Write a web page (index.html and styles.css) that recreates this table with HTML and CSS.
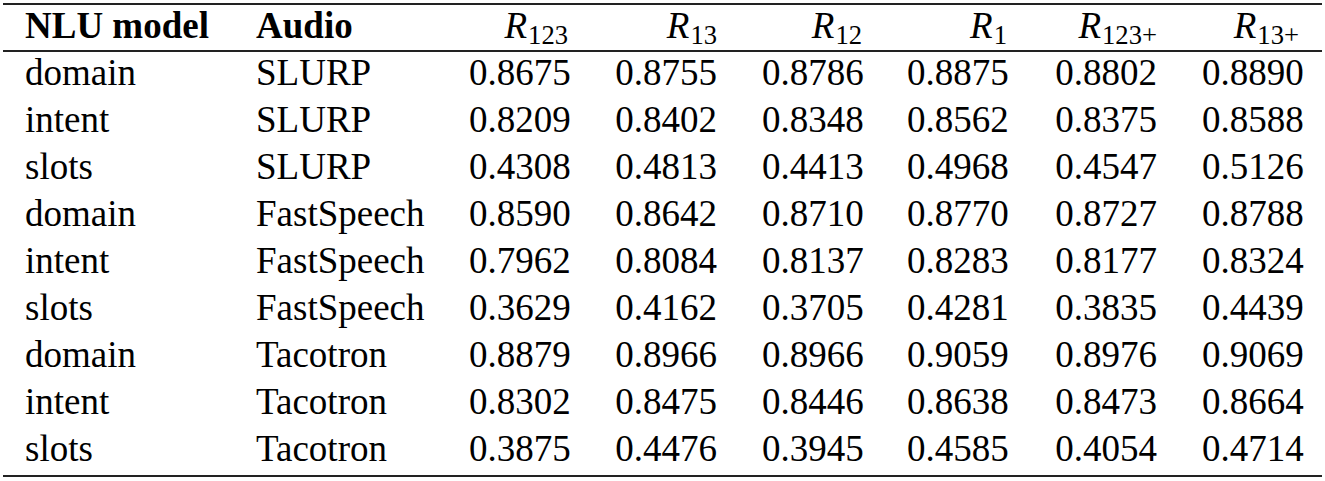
FILE: index.html
```html
<!DOCTYPE html>
<html lang="en">
<head>
    <meta charset="UTF-8">
    <title>NLU results</title>
    <link rel="stylesheet" href="styles.css">
</head>
<body>
    <table class="results">
        <colgroup>
            <col class="c-model">
            <col class="c-audio">
            <col class="c-num3">
            <col class="c-num4">
            <col class="c-num5">
            <col class="c-num6">
            <col class="c-num7">
            <col class="c-num8">
        </colgroup>
        <thead>
            <tr>
                <th class="txt">NLU model</th>
                <th class="txt">Audio</th>
                <th><i class="sym">R</i><sub>123</sub></th>
                <th><i class="sym">R</i><sub>13</sub></th>
                <th><i class="sym">R</i><sub>12</sub></th>
                <th><i class="sym">R</i><sub>1</sub></th>
                <th><i class="sym">R</i><sub>123+</sub></th>
                <th><i class="sym">R</i><sub>13+</sub></th>
            </tr>
        </thead>
        <tbody>
            <tr><td class="txt">domain</td><td class="txt">SLURP</td><td>0.8675</td><td>0.8755</td><td>0.8786</td><td>0.8875</td><td>0.8802</td><td>0.8890</td></tr>
            <tr><td class="txt">intent</td><td class="txt">SLURP</td><td>0.8209</td><td>0.8402</td><td>0.8348</td><td>0.8562</td><td>0.8375</td><td>0.8588</td></tr>
            <tr><td class="txt">slots</td><td class="txt">SLURP</td><td>0.4308</td><td>0.4813</td><td>0.4413</td><td>0.4968</td><td>0.4547</td><td>0.5126</td></tr>
            <tr><td class="txt">domain</td><td class="txt">FastSpeech</td><td>0.8590</td><td>0.8642</td><td>0.8710</td><td>0.8770</td><td>0.8727</td><td>0.8788</td></tr>
            <tr><td class="txt">intent</td><td class="txt">FastSpeech</td><td>0.7962</td><td>0.8084</td><td>0.8137</td><td>0.8283</td><td>0.8177</td><td>0.8324</td></tr>
            <tr><td class="txt">slots</td><td class="txt">FastSpeech</td><td>0.3629</td><td>0.4162</td><td>0.3705</td><td>0.4281</td><td>0.3835</td><td>0.4439</td></tr>
            <tr><td class="txt">domain</td><td class="txt">Tacotron</td><td>0.8879</td><td>0.8966</td><td>0.8966</td><td>0.9059</td><td>0.8976</td><td>0.9069</td></tr>
            <tr><td class="txt">intent</td><td class="txt">Tacotron</td><td>0.8302</td><td>0.8475</td><td>0.8446</td><td>0.8638</td><td>0.8473</td><td>0.8664</td></tr>
            <tr><td class="txt">slots</td><td class="txt">Tacotron</td><td>0.3875</td><td>0.4476</td><td>0.3945</td><td>0.4585</td><td>0.4054</td><td>0.4714</td></tr>
        </tbody>
    </table>
</body>
</html>
```

FILE: styles.css
```css
/* Tabla de resultados, estilo LaTeX */
body {
    margin: 0;
    background: #fff;
    color: #000;
    font-family: 'Liberation Serif', 'Times New Roman', serif;
}

.results {
    margin: 3px 0 0 3px;
    width: 1319px;
    table-layout: fixed;
    border-collapse: collapse;
    border-top: 2px solid #222;
    border-bottom: 2px solid #222;
    font-size: 37px;
}

.c-model { width: 231px; }
.c-audio { width: 213px; }
.c-num3 { width: 144px; }
.c-num4 { width: 149px; }
.c-num5 { width: 145px; }
.c-num6 { width: 145px; }
.c-num7 { width: 150px; }
.c-num8 { width: 142px; }

th, td {
    padding: 0 23px 6px 22px;
    line-height: 41px;
    text-align: right;
    white-space: nowrap;
    font-weight: normal;
}

thead th {
    padding-bottom: 4px;
    border-bottom: 2px solid #222;
}

.results .txt {
    text-align: left;
}

thead .txt {
    font-weight: bold;
}

/* simbolos matematicos de la cabecera */
.sym {
    font-style: italic;
    padding-right: 1px;
}

sub {
    font-size: 0.72em;
    line-height: 0;
    vertical-align: -0.22em;
}
```
